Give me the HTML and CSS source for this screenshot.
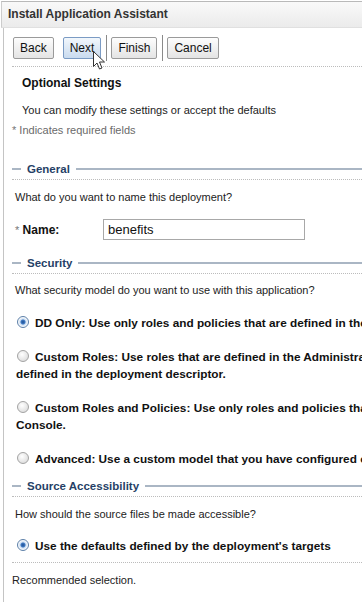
FILE: index.html
```html
<!DOCTYPE html>
<html lang="en">
<head>
    <meta charset="UTF-8">
    <meta name="viewport" content="width=device-width, initial-scale=1.0">
    <title>Install Application Assistant</title>
    <link rel="stylesheet" href="styles.css">
</head>
<body>
    <div class="assistant">
        <div class="titlebar">Install Application Assistant</div>

        <div class="content">
            <div class="toolbar">
                <button class="button">Back</button>
                <button class="button hover">Next</button>
                <span class="sep"></span>
                <button class="button">Finish</button>
                <span class="sep"></span>
                <button class="button">Cancel</button>
            </div>

            <div class="intro">
                <h2>Optional Settings</h2>
                <p>You can modify these settings or accept the defaults</p>
            </div>
            <p class="required"><span class="star">*</span> Indicates required fields</p>

            <!-- General -->
            <div class="section-head general"><span>General</span></div>
            <p class="question">What do you want to name this deployment?</p>
            <div class="name-row">
                <label class="field-label" for="name"><span class="star">*</span> Name:</label>
                <input class="text-input" id="name" type="text" value="benefits">
            </div>

            <!-- Security -->
            <div class="section-head security"><span>Security</span></div>
            <p class="question q-security">What security model do you want to use with this application?</p>
            <p class="option first"><span class="radio checked"></span>DD Only: Use only roles and policies that are defined in the deployment descriptor.</p>
            <p class="option"><span class="radio"></span>Custom Roles: Use roles that are defined in the Administration Console; use policies that are<br>defined in the deployment descriptor.</p>
            <p class="option"><span class="radio"></span>Custom Roles and Policies: Use only roles and policies that are defined in the Administration<br>Console.</p>
            <p class="option"><span class="radio"></span>Advanced: Use a custom model that you have configured on the realm's configuration page.</p>

            <!-- Source Accessibility -->
            <div class="section-head source"><span>Source Accessibility</span></div>
            <p class="question">How should the source files be made accessible?</p>
            <p class="option source-option"><span class="radio checked"></span>Use the defaults defined by the deployment's targets</p>
            <p class="note">Recommended selection.</p>
        </div>

        <svg class="cursor" width="13" height="20" viewBox="0 0 13 20">
            <path d="M0.5 0.5 L0.5 15.5 L4 12 L6.5 18 L9 17 L6.5 11 L11.5 11 Z" fill="#fff" stroke="#333" stroke-width="1"/>
        </svg>
    </div>
</body>
</html>
```

FILE: styles.css
```css
html, body {
    overflow: hidden;
}

body {
    margin: 0;
    font-family: 'Liberation Sans', Arial, sans-serif;
    font-size: 11px;
    color: #222;
    background-color: #fff;
}

.assistant {
    position: relative;
    height: 602px;
}

.titlebar {
    margin: 1px 0 0 1px;
    height: 25px;
    line-height: 25px;
    padding-left: 6px;
    border-top: 1px solid #b9b9b9;
    border-left: 1px solid #cccccc;
    border-bottom: 1px solid #e0e0e0;
    background: linear-gradient(#f9f9f9, #ebebeb);
    font-size: 12px;
    font-weight: bold;
    color: #333;
}

.content {
    margin-left: 3px;
    padding-left: 8px;
    border-left: 1px solid #c4c4c4;
    height: 100%;
    white-space: nowrap;
}

.content p {
    margin: 0;
    line-height: 16px;
}

.toolbar {
    display: flex;
    align-items: center;
    padding: 7px 0 5px 1px;
    border-bottom: 1px dotted #bcbcbc;
}

.button {
    height: 22px;
    padding: 0 6px;
    margin: 0;
    font-family: 'Liberation Sans', Arial, sans-serif;
    font-size: 12px;
    color: #111;
    border: 1px solid #9a9a9a;
    border-radius: 2px;
    background: linear-gradient(#fdfdfd, #e4e4e4);
}

.button + .button {
    margin-left: 9px;
}

.button.hover {
    border-color: #7b9bc4;
    background: linear-gradient(#f2f7fc, #c9dbef);
}

.sep {
    width: 1px;
    height: 26px;
    margin: 0 4px 0 5px;
    background-color: #8a8a8a;
}

.intro h2 {
    margin: 8px 0 0 10px;
    font-size: 12px;
    line-height: 16px;
    color: #111;
}

.intro p {
    margin: 11px 0 0 10px;
}

.required {
    margin-top: 4px !important;
    color: #6a6a6a;
}

.star {
    color: #777;
}

.section-head {
    display: flex;
    align-items: center;
    line-height: 16px;
    padding-bottom: 2px;
    border-bottom: 1px dotted #bcbcbc;
    font-size: 11.5px;
    font-weight: bold;
    color: #263f66;
}

.section-head::before,
.section-head::after {
    content: "";
    height: 2px;
    background-color: #aab6c4;
}

.section-head::before {
    width: 9px;
}

.section-head::after {
    flex: 1;
}

.section-head span {
    margin: 0 6px;
}

.general {
    margin-top: 23px;
}

.security {
    margin-top: 15px;
}

.source {
    margin-top: 10px;
}

.question {
    margin-top: 9px !important;
    padding-left: 3px;
}

.q-security {
    margin-top: 8px !important;
}

.name-row {
    display: flex;
    align-items: center;
    margin-top: 14px;
    padding-left: 3px;
}

.field-label {
    width: 88px;
    font-size: 12px;
    font-weight: bold;
    color: #111;
}

.field-label .star {
    font-size: 11px;
    font-weight: normal;
}

.text-input {
    width: 202px;
    height: 21px;
    box-sizing: border-box;
    margin: 0;
    padding: 0 4px;
    border: 1px solid #a8a8a8;
    font-family: 'Liberation Sans', Arial, sans-serif;
    font-size: 13px;
    color: #111;
}

.option {
    margin-top: 17px !important;
    padding-left: 4px;
    line-height: 17px !important;
    font-size: 11.8px;
    font-weight: bold;
    color: #111;
}

.source-option {
    margin-top: 16px !important;
    padding-bottom: 7px;
    border-bottom: 1px dotted #bcbcbc;
}

.radio {
    display: inline-block;
    width: 10px;
    height: 10px;
    margin: 0 6px 0 1px;
    vertical-align: -1px;
    border: 1px solid #a3a3a3;
    border-radius: 50%;
    background: radial-gradient(circle at 40% 35%, #ffffff, #d4d4d4);
}

.radio.checked {
    border-color: #5c7fa8;
    background: radial-gradient(circle, #1f4f93 0, #3f79c2 2px, #cfe0f3 3px, #ffffff 5px);
}

.note {
    margin-top: 9px !important;
}

.cursor {
    position: absolute;
    left: 93px;
    top: 50px;
}
```
